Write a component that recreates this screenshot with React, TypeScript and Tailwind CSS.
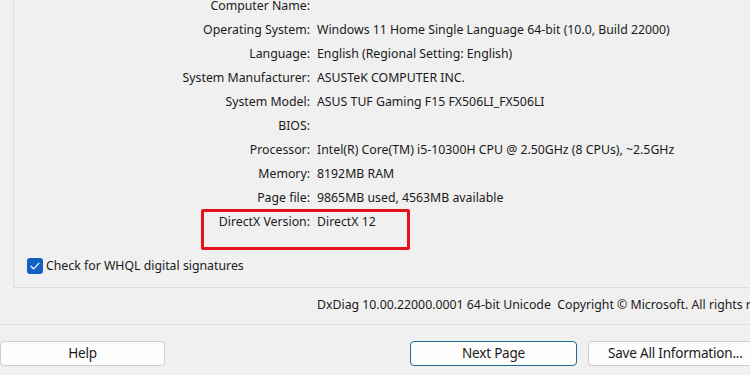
import React from 'react';

const rows: [string, string][] = [
  ['Computer Name:', ''],
  ['Operating System:', 'Windows 11 Home Single Language 64-bit (10.0, Build 22000)'],
  ['Language:', 'English (Regional Setting: English)'],
  ['System Manufacturer:', 'ASUSTeK COMPUTER INC.'],
  ['System Model:', 'ASUS TUF Gaming F15 FX506LI_FX506LI'],
  ['BIOS:', ''],
  ['Processor:', 'Intel(R) Core(TM) i5-10300H CPU @ 2.50GHz (8 CPUs), ~2.5GHz'],
  ['Memory:', '8192MB RAM'],
  ['Page file:', '9865MB used, 4563MB available'],
  ['DirectX Version:', 'DirectX 12'],
];

const App: React.FC = () => {
  return (
    <div className="relative w-[750px] h-[375px] overflow-hidden bg-[#f0f0f0] text-[12.3px] text-[#1a1a1a] font-['Noto_Sans',sans-serif]">
      {/* system info group */}
      <div className="ml-[13px] h-[288px] border-l border-b border-[#dcdcdc] flex flex-col">
        <div className="-mt-[6px]">
          {rows.map(([label, value]) => (
            <div key={label} className="h-[24px] flex items-center whitespace-nowrap">
              <span className="w-[296px] shrink-0 text-right">{label}</span>
              <span className="ml-[7px]">{value}</span>
            </div>
          ))}
        </div>
        <label className="mt-[22px] ml-[13px] h-[20px] flex items-center">
          <span className="w-[16px] h-[16px] rounded-[3px] bg-[#1360c4] flex items-center justify-center">
            <svg width="10" height="8" viewBox="0 0 10 8" fill="none">
              <path d="M1 4.2L3.7 6.8L9 1.2" stroke="white" strokeWidth="1.2" strokeLinecap="round" strokeLinejoin="round" />
            </svg>
          </span>
          <span className="ml-[3px]">Check for WHQL digital signatures</span>
        </label>
      </div>

      <div className="mt-[8px] h-[18px] pl-[317px] flex items-center whitespace-nowrap">
        DxDiag 10.00.22000.0001 64-bit Unicode&nbsp;&nbsp;Copyright © Microsoft. All rights reserved.
      </div>

      <div className="mt-[10px] border-t border-[#e0e0e0]" />

      <div className="mt-[16px] flex whitespace-nowrap text-[13.5px] tracking-[-0.2px]">
        <button className="shrink-0 w-[165px] h-[25px] rounded-[4px] border border-[#cfcfcf] bg-[#fdfdfd]">Help</button>
        <button className="shrink-0 ml-[245px] w-[167px] h-[25px] rounded-[4px] border border-[#1e6c8e] bg-[#fdfdfd]">Next Page</button>
        <button className="shrink-0 ml-[11px] w-[175px] h-[25px] rounded-[4px] border border-[#cfcfcf] bg-[#fdfdfd] text-left pl-[19px]">Save All Information...</button>
      </div>

      {/* red annotation box */}
      <div className="absolute left-[201px] top-[209px] w-[209px] h-[41px] border-[3px] border-[#e3121c] rounded-[2px]" />
    </div>
  );
};

export default App;
